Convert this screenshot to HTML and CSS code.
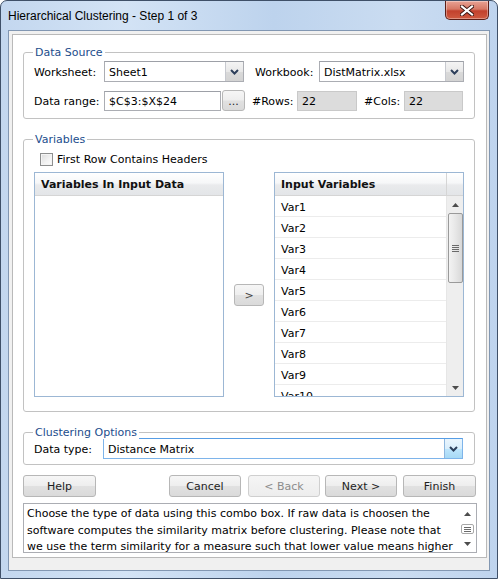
FILE: index.html
```html
<!DOCTYPE html>
<html>
<head>
<meta charset="utf-8">
<title>Hierarchical Clustering - Step 1 of 3</title>
<link rel="stylesheet" href="styles.css">
</head>
<body>
<div class="window">
  <div class="titlebar">
    <span class="title">Hierarchical Clustering - Step 1 of 3</span>
    <div class="close">
      <svg width="14" height="11" viewBox="0 0 14 11"><path d="M2 1.5 L12 9.5 M12 1.5 L2 9.5" stroke="#3a1410" stroke-width="4" stroke-linecap="square"/><path d="M2 1.5 L12 9.5 M12 1.5 L2 9.5" stroke="#ffffff" stroke-width="2.2" stroke-linecap="square"/></svg>
    </div>
  </div>
  <div class="client">
    <div class="panel">
      <div class="group ds">
        <span class="group-title">Data Source</span>
        <div class="row">
          <span class="lbl l-ws">Worksheet:</span>
          <div class="combo c-ws"><span class="val">Sheet1</span><span class="drop"><svg width="9" height="6" viewBox="0 0 9 6"><path d="M1 1 L4.5 4.5 L8 1" fill="none" stroke="#2c3e5a" stroke-width="2"/></svg></span></div>
          <span class="lbl l-wb">Workbook:</span>
          <div class="combo c-wb"><span class="val">DistMatrix.xlsx</span><span class="drop"><svg width="9" height="6" viewBox="0 0 9 6"><path d="M1 1 L4.5 4.5 L8 1" fill="none" stroke="#2c3e5a" stroke-width="2"/></svg></span></div>
        </div>
        <div class="row row2">
          <span class="lbl l-ws">Data range:</span>
          <div class="textbox t-range">$C$3:$X$24</div>
          <div class="btn btn-dots">...</div>
          <span class="lbl l-rows">#Rows:</span>
          <div class="ro t-rows">22</div>
          <span class="lbl l-cols">#Cols:</span>
          <div class="ro t-cols">22</div>
        </div>
      </div>

      <div class="group vars">
        <span class="group-title">Variables</span>
        <label class="check-row"><span class="checkbox"></span><span>First Row Contains Headers</span></label>
        <div class="lists">
          <div class="list">
            <div class="list-head"><span class="hcell">Variables In Input Data</span></div>
            <div class="list-body"></div>
          </div>
          <div class="mid"><div class="btn btn-move">&gt;</div></div>
          <div class="list">
            <div class="list-head"><span class="hcell">Input Variables</span><span class="hcell-sb"></span></div>
            <div class="list-body with-sb">
              <div class="rows">
                <div class="item">Var1</div>
                <div class="item">Var2</div>
                <div class="item">Var3</div>
                <div class="item">Var4</div>
                <div class="item">Var5</div>
                <div class="item">Var6</div>
                <div class="item">Var7</div>
                <div class="item">Var8</div>
                <div class="item">Var9</div>
                <div class="item">Var10</div>
              </div>
              <div class="vscroll">
                <span class="arrow up"><svg width="7" height="4" viewBox="0 0 7 4"><path d="M0 4 L3.5 0 L7 4 Z" fill="#4d4d4d"/></svg></span>
                <span class="thumb"><span class="grip"></span></span>
                <span class="track"></span>
                <span class="arrow down"><svg width="7" height="4" viewBox="0 0 7 4"><path d="M0 0 L3.5 4 L7 0 Z" fill="#4d4d4d"/></svg></span>
              </div>
            </div>
          </div>
        </div>
      </div>

      <div class="group clus">
        <span class="group-title">Clustering Options</span>
        <div class="row">
          <span class="lbl l-dt">Data type:</span>
          <div class="combo c-dt focus"><span class="val">Distance Matrix</span><span class="drop"><svg width="9" height="6" viewBox="0 0 9 6"><path d="M1 1 L4.5 4.5 L8 1" fill="none" stroke="#2c3e5a" stroke-width="2"/></svg></span></div>
        </div>
      </div>

      <div class="buttons">
        <div class="btn b-help">Help</div>
        <div class="spacer"></div>
        <div class="btn b-cancel">Cancel</div>
        <div class="btn b-back disabled">&lt; Back</div>
        <div class="btn b-next">Next &gt;</div>
        <div class="btn b-finish">Finish</div>
      </div>

      <div class="helpbox">
        <div class="helptext">Choose the type of data using this combo box. If raw data is choosen the<br>software computes the similarity matrix before clustering. Please note that<br>we use the term similarity for a measure such that lower value means higher<br>similarity.</div>
        <div class="hscroll">
          <span class="arrow up"><svg width="7" height="4" viewBox="0 0 7 4"><path d="M0 4 L3.5 0 L7 4 Z" fill="#4d4d4d"/></svg></span>
          <span class="mini-thumb"><span class="grip"></span></span>
          <span class="arrow down"><svg width="7" height="4" viewBox="0 0 7 4"><path d="M0 0 L3.5 4 L7 0 Z" fill="#4d4d4d"/></svg></span>
        </div>
      </div>
    </div>
  </div>
</div>
</body>
</html>
```
FILE: styles.css
```css
* { box-sizing: border-box; }
html, body { margin: 0; padding: 0; }
body {
  width: 498px; height: 579px; overflow: hidden;
  background: #ffffff;
  font-family: "DejaVu Sans", "Liberation Sans", sans-serif;
  font-size: 11px; color: #000;
}
.window {
  width: 498px; height: 579px;
  border: 1px solid #3f5068;
  border-radius: 7px 7px 0 0;
  background: linear-gradient(to right, #c3d7ef 0%, #d3e3f5 25%, #bdd3ed 55%, #cadcf1 80%, #bfd4ee 100%);
  display: flex; flex-direction: column;
  padding: 0 7px 7px 7px;
}
.titlebar {
  height: 29px; flex: none;
  display: flex; align-items: flex-start; justify-content: space-between;
}
.title {
  font-family: "Liberation Sans", Arial, sans-serif;
  font-size: 12px; color: #000;
  margin-top: 8px;
}
.close {
  width: 44px; height: 19px; margin-right: 1px;
  border: 1px solid #5b1e17; border-top: none;
  border-radius: 0 0 5px 5px;
  background: linear-gradient(to bottom, #e8a294 0%, #d67865 45%, #c2412d 55%, #cf5a40 100%);
  box-shadow: inset 0 0 0 1px rgba(255,255,255,0.35);
  display: flex; align-items: center; justify-content: center;
}
.client {
  flex: 1;
  border: 1px solid #8297b2;
  background: #f0f0f0;
  padding: 3px 3px 12px 3px;
  display: flex;
}
.panel {
  flex: 1;
  border: 1px solid #b9b9b9;
  background: #ffffff;
  padding: 17px 11px 0 10px;
  display: flex; flex-direction: column;
}
.group {
  position: relative;
  border: 1px solid #c2c2c2;
  border-radius: 3px;
  padding: 8px 10px 7px 10px;
}
.group-title {
  position: absolute; top: -7px; left: 9px;
  background: #fff; padding: 0 2px;
  line-height: 13px;
  color: #1c4d8c;
}
.row { display: flex; align-items: center; height: 21px; }
.row2 { margin-top: 8px; }
.lbl { flex: none; white-space: nowrap; padding-top: 1px; }
.l-ws { width: 70px; }
.l-wb { width: 64px; margin-left: 11px; }
.l-rows { width: 45px; margin-left: 7px; }
.l-cols { width: 40px; margin-left: 7px; }
.l-dt { width: 69px; }

.combo {
  flex: none; height: 21px;
  border: 1px solid #abadb3;
  border-top-color: #9da0a7;
  background: #fff;
  display: flex; align-items: center;
  padding-left: 4px;
}
.combo .val { flex: 1; white-space: nowrap; padding-top: 1px; }
.combo .drop {
  width: 18px; height: 19px;
  border-left: 1px solid #c7c9cf;
  background: linear-gradient(to bottom, #f4f4f4 0%, #e8e8e8 50%, #dadada 51%, #d3d3d3 100%);
  display: flex; align-items: center; justify-content: center;
}
.c-ws { width: 140px; }
.c-wb { width: 145px; }
.c-dt { width: 360px; }
.combo.focus { border-color: #7eb4ea; border-top-color: #569de5; }
.combo.focus .drop {
  border-left-color: #8fb7de;
  background: linear-gradient(to bottom, #eaf5fd 0%, #d9eefc 50%, #bee6fd 51%, #a7d9f5 100%);
}

.textbox {
  flex: none; height: 20px;
  border: 1px solid #abadb3; border-top-color: #9da0a7;
  background: #fff; padding-left: 4px; padding-top: 1px;
  display: flex; align-items: center;
}
.t-range { width: 117px; }
.ro {
  flex: none; height: 20px;
  border: 1px solid #c9c9c9;
  background: #dcdcdc;
  padding-left: 4px; padding-top: 1px;
  display: flex; align-items: center;
}
.t-rows { width: 60px; }
.t-cols { width: 59px; }

.btn {
  flex: none;
  border: 1px solid #b7b7b7;
  border-radius: 3px;
  background: linear-gradient(to bottom, #f6f6f6 0%, #eeeeee 48%, #e1e1e1 52%, #dadada 100%);
  display: flex; align-items: center; justify-content: center;
  color: #1e1e1e;
  white-space: nowrap;
}
.btn-dots { width: 23px; height: 21px; margin-left: 1px; align-items: flex-end; padding-bottom: 4px; line-height: 8px; }
.btn.disabled {
  background: linear-gradient(to bottom, #f5f5f5, #ededed);
  border-color: #cfcfcf;
  color: #8c8c8c;
}

.vars { margin-top: 20px; padding: 12px 10px 14px 10px; }
.check-row { display: flex; align-items: center; height: 14px; padding-left: 6px; }
.checkbox {
  width: 13px; height: 13px; margin-right: 4px;
  border: 1px solid #8e8f8f;
  background: linear-gradient(135deg, #dcdcdc 0%, #f3f3f3 60%, #fdfdfd 100%);
  box-shadow: inset 0 0 0 1px #f4f4f4;
}
.lists { display: flex; margin-top: 6px; height: 225px; }
.list {
  width: 190px; flex: none;
  border: 1px solid #9cb7d4;
  display: flex; flex-direction: column;
  background: #fff;
}
.list-head {
  height: 23px; flex: none;
  display: flex;
  border-bottom: 1px solid #d5d5d5;
  background: linear-gradient(to bottom, #ffffff 0%, #f6f7f8 45%, #e9eaec 55%, #e3e5e8 100%);
}
.hcell { flex: 1; font-weight: bold; padding-left: 6px; padding-top: 1px; display: flex; align-items: center; color: #111; }
.hcell-sb { width: 17px; border-left: 1px solid #d5d5d5; }
.list-body { flex: 1; display: flex; overflow: hidden; }
.rows { flex: 1; overflow: hidden; }
.item {
  height: 21px; line-height: 17px;
  padding: 3px 0 0 6px;
  border-bottom: 1px solid #ececec;
}
.mid { width: 50px; flex: none; display: flex; justify-content: center; padding-top: 112px; }
.btn-move { width: 30px; height: 22px; color: #444; }

.vscroll {
  width: 17px; flex: none;
  background: #eeeeee;
  border-left: 1px solid #e6e6e6;
  display: flex; flex-direction: column; align-items: center;
}
.vscroll .arrow { height: 17px; display: flex; align-items: center; justify-content: center; flex: none; }
.vscroll .thumb {
  width: 15px; height: 70px; flex: none;
  border: 1px solid #9a9a9a; border-radius: 2px;
  background: linear-gradient(to right, #f3f3f3, #e7e7e7 50%, #d8d8d8);
  display: flex; align-items: center; justify-content: center;
}
.grip {
  width: 7px; height: 7px;
  background: repeating-linear-gradient(to bottom, #6a6a6a 0 1px, transparent 1px 2px);
}
.vscroll .track { flex: 1; }

.clus { margin-top: 20px; padding: 5px 10px 5px 10px; }

.buttons { display: flex; margin-top: 10px; height: 22px; margin-right: -1px; }
.buttons .btn { width: 73px; height: 22px; }
.spacer { flex: 1; }
.b-cancel { width: 72px !important; }
.b-back { width: 72px !important; margin-left: 7px; }
.b-next { width: 72px !important; margin-left: 5px; }
.b-finish { margin-left: 6px; }

.helpbox {
  margin-top: 6px; height: 50px; margin-right: -2px;
  border: 1px solid #abadb3;
  display: flex; overflow: hidden;
  background: #fff;
}
.helptext {
  flex: 1; padding: 2px 0 0 3px;
  line-height: 16.5px;
  white-space: nowrap; overflow: hidden;
}
.hscroll {
  width: 17px; flex: none;
  display: flex; flex-direction: column; align-items: center; justify-content: space-between;
  padding: 6px 0 4px 0;
}
.hscroll .arrow { height: 8px; display: flex; align-items: center; }
.mini-thumb {
  width: 13px; height: 10px;
  border: 1px solid #a8a8a8; border-radius: 2px;
  display: flex; align-items: center; justify-content: center;
}
.mini-thumb .grip { width: 7px; height: 5px; }
```
